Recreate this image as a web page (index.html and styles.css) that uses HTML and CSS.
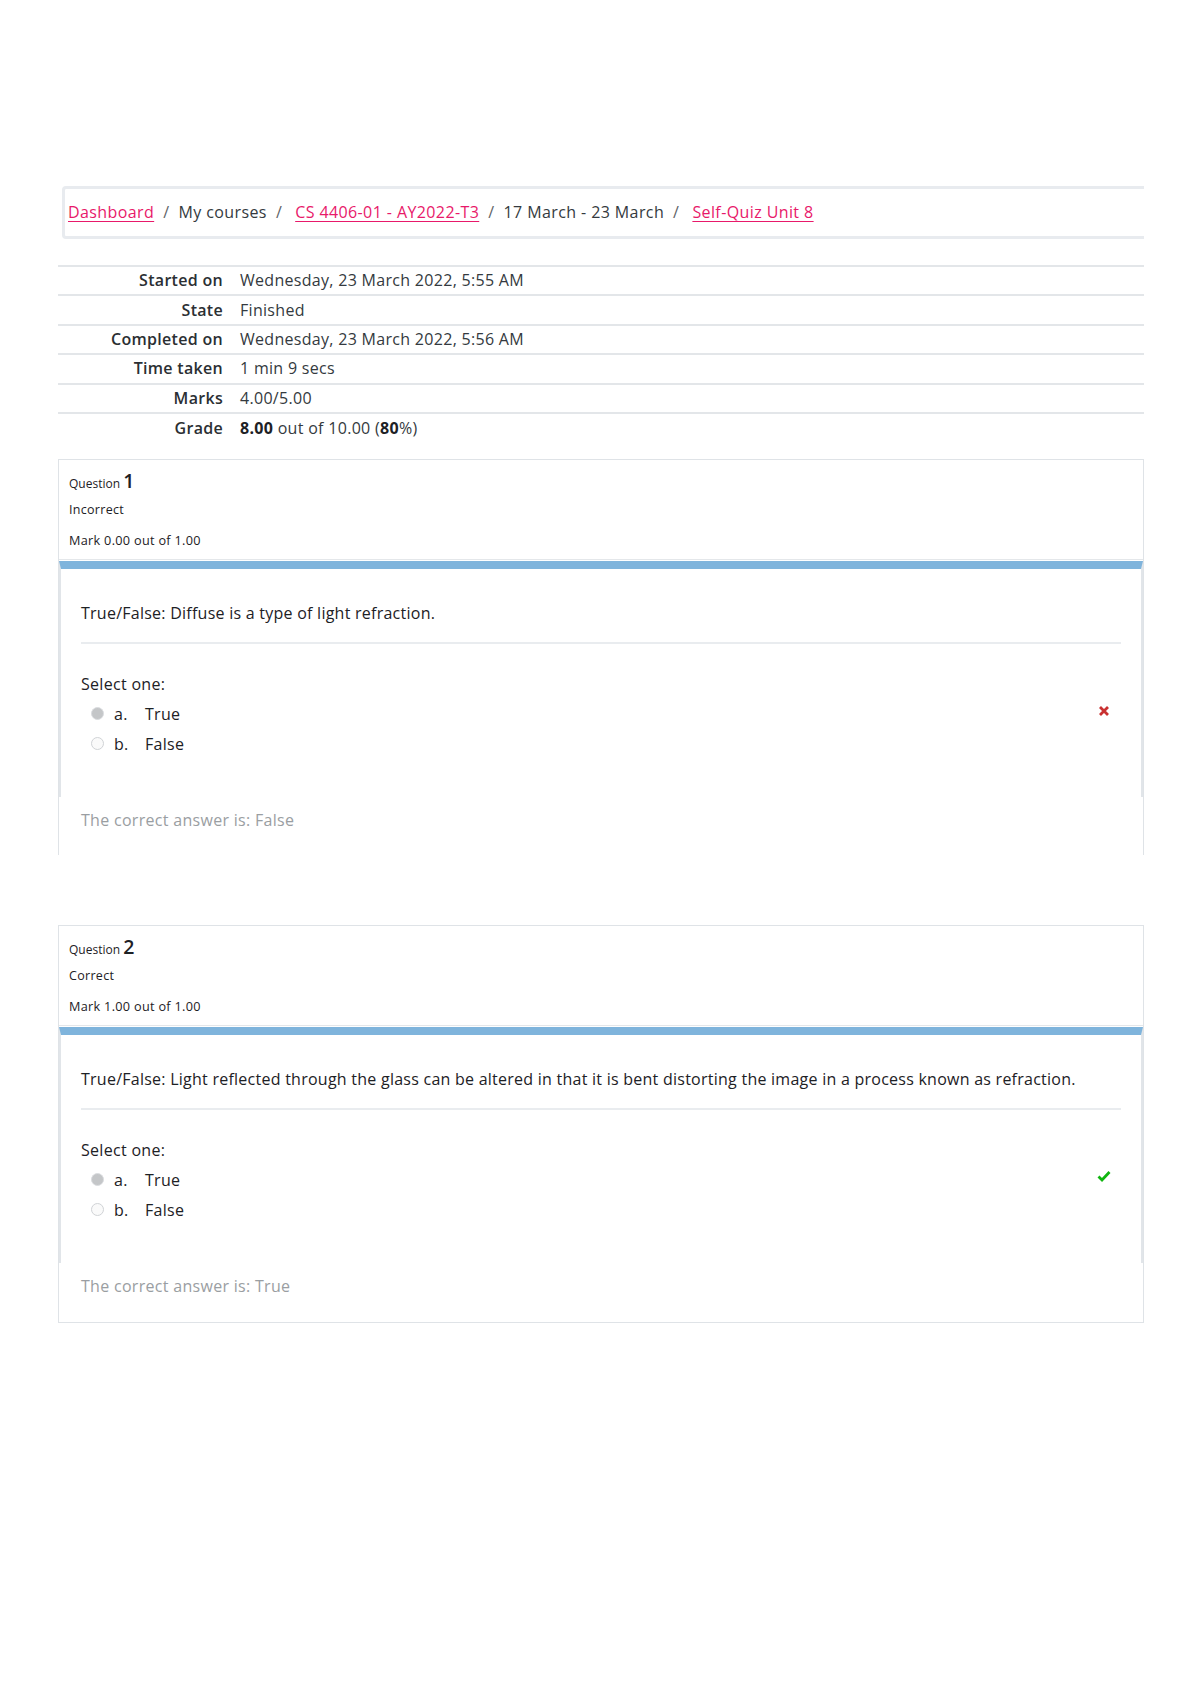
FILE: index.html
```html
<!DOCTYPE html>
<html lang="en">
<head>
<meta charset="utf-8">
<title>Self-Quiz Unit 8: Attempt review</title>
<link rel="stylesheet" href="styles.css">
</head>
<body>
<div class="page">
  <nav class="crumbs">
    <a class="crumb-link" href="#">Dashboard</a><span class="sep">/</span>
    <span class="crumb">My courses</span><span class="sep">/</span>
    <a class="crumb-link crumb-gap" href="#">CS 4406-01 - AY2022-T3</a><span class="sep">/</span>
    <span class="crumb">17 March - 23 March</span><span class="sep">/</span>
    <a class="crumb-link crumb-gap" href="#">Self-Quiz Unit 8</a>
  </nav>

  <table class="summary">
    <tr><th>Started on</th><td>Wednesday, 23 March 2022, 5:55 AM</td></tr>
    <tr><th>State</th><td>Finished</td></tr>
    <tr><th>Completed on</th><td>Wednesday, 23 March 2022, 5:56 AM</td></tr>
    <tr><th>Time taken</th><td>1 min 9 secs</td></tr>
    <tr><th>Marks</th><td>4.00/5.00</td></tr>
    <tr><th>Grade</th><td><b>8.00</b> out of 10.00 (<b>80</b>%)</td></tr>
  </table>

  <div class="que que-cut">
    <div class="info">
      <div class="qno-line">Question <span class="qno">1</span></div>
      <div class="state">Incorrect</div>
      <div class="grade">Mark 0.00 out of 1.00</div>
    </div>
    <div class="formulation">
      <div class="qtext">True/False: Diffuse is a type of light refraction.</div>
      <div class="ablock">
        <div class="answers">
          <div class="prompt">Select one:</div>
          <div class="option"><span class="radio radio-on"></span><span class="letter">a.</span><span class="opt-text">True</span></div>
          <div class="option"><span class="radio"></span><span class="letter">b.</span><span class="opt-text">False</span></div>
        </div>
        <svg class="mark-icon" width="12" height="12" viewBox="0 0 12 12" aria-hidden="true">
          <path d="M2 2 L10 10 M10 2 L2 10" stroke="#c93131" stroke-width="2.8" stroke-linecap="butt"/>
        </svg>
      </div>
    </div>
    <div class="outcome">The correct answer is: False</div>
  </div>

  <div class="que">
    <div class="info">
      <div class="qno-line">Question <span class="qno">2</span></div>
      <div class="state">Correct</div>
      <div class="grade">Mark 1.00 out of 1.00</div>
    </div>
    <div class="formulation">
      <div class="qtext">True/False: Light reflected through the glass can be altered in that it is bent distorting the image in a process known as refraction.</div>
      <div class="ablock">
        <div class="answers">
          <div class="prompt">Select one:</div>
          <div class="option"><span class="radio radio-on"></span><span class="letter">a.</span><span class="opt-text">True</span></div>
          <div class="option"><span class="radio"></span><span class="letter">b.</span><span class="opt-text">False</span></div>
        </div>
        <svg class="mark-icon mark-ok" width="14" height="12" viewBox="0 0 14 12" aria-hidden="true">
          <path d="M1.5 6.5 L5 10 L12.5 2" fill="none" stroke="#10b510" stroke-width="2.8"/>
        </svg>
      </div>
    </div>
    <div class="outcome">The correct answer is: True</div>
  </div>
</div>
</body>
</html>
```

FILE: styles.css
```css
html, body {
  margin: 0;
  padding: 0;
  background: #ffffff;
}

body {
  font-family: "Open Sans", "Liberation Sans", sans-serif;
  color: #1d2125;
  font-size: 16px;
  letter-spacing: 0.3px;
}

.page {
  width: 1086px;
  padding: 186px 0 0 58px;
}

/* breadcrumb */
.crumbs {
  display: flex;
  align-items: center;
  margin-left: 4px;
  height: 45px;
  padding-bottom: 2px;
  border: 3px solid #e8ebef;
  border-right: none;
  border-radius: 4px 0 0 4px;
  padding-left: 3px;
  font-size: 16px;
  line-height: 24px;
  letter-spacing: 0.4px;
}

.crumb-link {
  color: #e8196a;
  text-decoration: underline;
  text-underline-offset: 3px;
}

.crumb-gap {
  margin-left: 4px;
}

.crumb {
  color: #343a40;
}

.sep {
  color: #5f6468;
  padding: 0 9px;
}

/* summary table */
.summary {
  margin-top: 26px;
  width: 1086px;
  border-collapse: collapse;
  font-size: 16px;
}

.summary th,
.summary td {
  border-top: 2px solid #e3e6e9;
  height: 27.4px;
  padding: 0;
  line-height: 27px;
  vertical-align: middle;
}

.summary th {
  width: 165px;
  text-align: right;
  font-weight: 600;
  color: #2b2f33;
}

.summary td {
  padding-left: 17px;
  color: #343a40;
}

.summary td b {
  font-weight: 700;
  color: #1d2125;
}

.summary tr:last-child th,
.summary tr:last-child td {
  height: 30px;
}

/* questions */
.que {
  margin-top: 15px;
  border: 1px solid #dfe3e7;
  display: flex;
  flex-direction: column;
}

.que + .que {
  margin-top: 70px;
}

.que-cut {
  border-bottom: none;
  height: 395px;
}

.info {
  padding: 11px 10px 9px 10px;
  border-bottom: 1px solid #e4e7ea;
  font-size: 12.5px;
  color: #1d2125;
}

.qno-line {
  line-height: 20px;
  height: 22px;
  font-size: 12px;
  letter-spacing: 0;
}

.qno {
  font-size: 19.5px;
  font-weight: 600;
}

.state {
  line-height: 20px;
  margin-top: 7px;
}

.grade {
  line-height: 20px;
  margin-top: 10px;
  font-size: 12.7px;
}

.formulation {
  border-top: 8px solid #7fb4dc;
  border-left: 2px solid #e1e5e9;
  border-right: 2px solid #e1e5e9;
  padding: 32px 20px 38px 20px;
  margin-top: 1px;
}

.qtext {
  line-height: 24px;
  padding-bottom: 17px;
  border-bottom: 2px solid #e9ecef;
  color: #1d2125;
  letter-spacing: 0.25px;
}

.ablock {
  display: flex;
  justify-content: space-between;
  align-items: flex-start;
  padding-right: 11px;
}

.answers {
  margin-top: 28px;
}

.prompt {
  line-height: 24px;
  margin-bottom: 3px;
}

.option {
  display: flex;
  align-items: center;
  height: 30px;
  padding-left: 10px;
}

.radio {
  width: 11px;
  height: 11px;
  border: 1px solid #d0d3d6;
  border-radius: 50%;
  background: #fafafa;
  margin-right: 10px;
}

.radio-on {
  background: #c4c6c8;
  border-color: #dadcdf;
}

.letter {
  width: 31px;
  color: #1d2125;
}

.opt-text {
  color: #1d2125;
}

.mark-icon {
  margin-top: 61px;
}

.mark-ok {
  margin-top: 60px;
  margin-right: -1px;
}

.outcome {
  padding: 11px 22px 24px 22px;
  line-height: 24px;
  color: #9a9ea2;
}
```
